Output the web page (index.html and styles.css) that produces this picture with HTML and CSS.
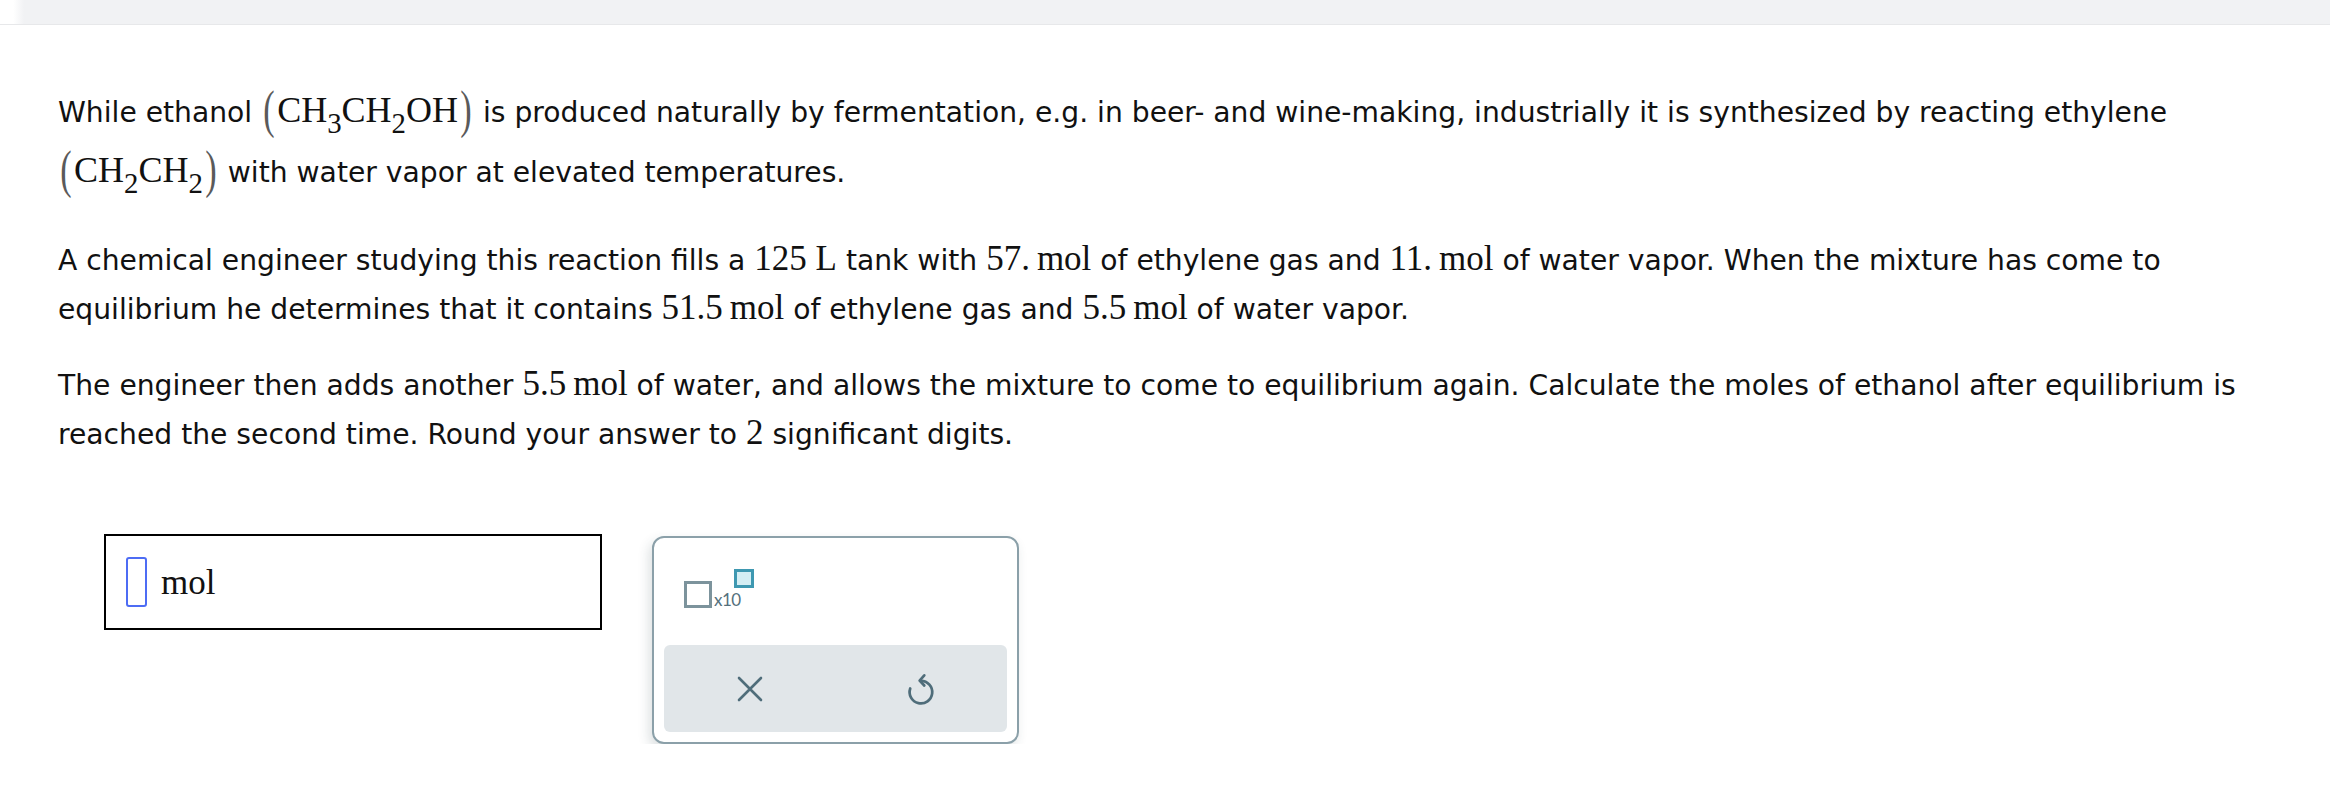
FILE: index.html
```html
<!DOCTYPE html>
<html lang="en">
<head>
<meta charset="utf-8">
<title>Equilibrium question</title>
<link rel="stylesheet" href="styles.css">
</head>
<body>
<div class="topbar"><div class="topbar-edge"></div></div>
<main class="content">
  <p class="para para-1">While ethanol <span class="formula"><span class="paren">(</span>CH<sub>3</sub>CH<sub>2</sub>OH<span class="paren">)</span></span> is produced naturally by fermentation, e.g. in beer- and wine-making, industrially it is synthesized by reacting ethylene <span class="formula"><span class="paren">(</span>CH<sub>2</sub>CH<sub>2</sub><span class="paren">)</span></span> with water vapor at elevated temperatures.</p>
  <p class="para para-2">A chemical engineer studying this reaction fills a <span class="m">125 L</span> tank with <span class="m">57.&#8201;mol</span> of ethylene gas and <span class="m">11.&#8201;mol</span> of water vapor. When the mixture has come to equilibrium he determines that it contains <span class="m">51.5&#8201;mol</span> of ethylene gas and <span class="m">5.5&#8201;mol</span> of water vapor.</p>
  <p class="para para-3">The engineer then adds another <span class="m">5.5&#8201;mol</span> of water, and allows the mixture to come to equilibrium again. Calculate the moles of ethanol after equilibrium is reached the second time. Round your answer to <span class="m">2</span> significant digits.</p>
  <div class="answer-row">
    <div class="answer-box"><span class="cursor"></span><span class="unit">mol</span></div>
    <div class="toolbox">
      <div class="tool-top">
        <div class="sci">
          <span class="sci-base"></span>
          <span class="sci-text">x10</span>
          <span class="sci-exp"></span>
        </div>
      </div>
      <div class="tool-actions">
        <button class="tool-btn" aria-label="Clear">
          <svg width="26" height="26" viewBox="0 0 26 26"><path d="M2 2 L24 24 M24 2 L2 24" fill="none" stroke="#4f6d7a" stroke-width="2.6" stroke-linecap="round"/></svg>
        </button>
        <button class="tool-btn" aria-label="Undo">
          <svg width="30" height="36" viewBox="0 0 22 26"><path d="M11 7 A8.3 8.3 0 1 1 3.1 12.6" fill="none" stroke="#4f6d7a" stroke-width="2" stroke-linecap="round"/><path d="M13.4 3 L10 6.8 L13.4 10.4" fill="none" stroke="#4f6d7a" stroke-width="2" stroke-linecap="round" stroke-linejoin="round"/></svg>
        </button>
      </div>
    </div>
  </div>
</main>
</body>
</html>
```

FILE: styles.css
```css
html, body {
  margin: 0;
  padding: 0;
  background: #ffffff;
}

body {
  font-family: "DejaVu Sans", Verdana, sans-serif;
  color: #111111;
}

.topbar {
  height: 24px;
  background: #f1f2f4;
  border-bottom: 1px solid #e7e8ea;
  display: flex;
}

.topbar-edge {
  width: 24px;
  background: linear-gradient(to right, #ffffff 55%, #f1f2f4);
}

.content {
  padding: 58px 60px 0 58px;
}

.para {
  margin: 0 0 25px;
  font-size: 28.2px;
  line-height: 49px;
}

.para-1 {
  line-height: 60px;
  margin-bottom: 33px;
}

.para-2 {
  margin-bottom: 27px;
}

.formula {
  font-family: "Liberation Serif", "Times New Roman", serif;
  font-size: 36px;
  line-height: 0;
  white-space: nowrap;
  color: #111;
}

.formula sub {
  font-size: 0.8em;
  line-height: 0;
  vertical-align: -0.38em;
}

.paren {
  display: inline-block;
  transform: scale(0.95, 1.45);
  color: #5a5a5a;
  line-height: 1;
  margin: 0 2px;
}

.m {
  font-family: "Liberation Serif", "Times New Roman", serif;
  font-size: 35px;
  line-height: 0;
  white-space: nowrap;
}

.answer-row {
  display: flex;
  align-items: flex-start;
  gap: 50px;
  margin-top: 75px;
  padding-left: 46px;
}

.answer-box {
  box-sizing: border-box;
  width: 498px;
  height: 96px;
  border: 2px solid #000;
  display: flex;
  align-items: center;
  padding-left: 20px;
  gap: 14px;
}

.cursor {
  box-sizing: border-box;
  width: 21px;
  height: 50px;
  border: 2px solid #4d6cf4;
  border-radius: 3px;
}

.unit {
  font-family: "Liberation Serif", "Times New Roman", serif;
  font-size: 35px;
  margin-top: 2px;
}

.toolbox {
  box-sizing: border-box;
  margin-top: 2px;
  width: 367px;
  height: 208px;
  border: 2px solid #8ba0a9;
  border-radius: 12px;
  background: #fff;
  box-shadow: -3px 5px 12px rgba(40, 60, 70, 0.16);
  display: flex;
  flex-direction: column;
}

.tool-top {
  height: 107px;
  padding: 31px 0 0 30px;
  box-sizing: border-box;
}

.sci {
  display: flex;
  align-items: flex-start;
}

.sci-base {
  box-sizing: border-box;
  width: 28px;
  height: 27px;
  border: 3px solid #7c939c;
  margin-top: 12px;
}

.sci-text {
  font-family: Lato, "Open Sans", sans-serif;
  font-size: 17px;
  color: #54707c;
  margin-top: 20px;
  margin-left: 2px;
  letter-spacing: -0.5px;
}

.sci-exp {
  box-sizing: border-box;
  width: 20px;
  height: 19px;
  border: 3px solid #3e98b1;
  background: #d4eef4;
  margin-left: -7px;
}

.tool-actions {
  flex: 1;
  margin: 0 10px 10px;
  background: #e1e6e9;
  border-radius: 6px;
  display: flex;
}

.tool-btn {
  flex: 1;
  background: none;
  border: none;
  padding: 0;
  display: flex;
  align-items: center;
  justify-content: center;
  cursor: pointer;
}
```
